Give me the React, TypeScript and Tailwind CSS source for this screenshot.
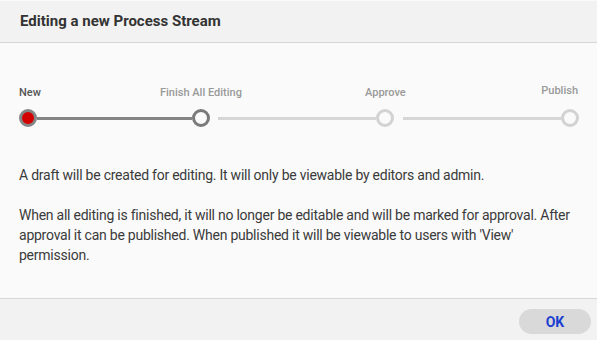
const STEPS = ["New", "Finish All Editing", "Approve", "Publish"];

function Circle({ kind }: { kind: "current" | "done" | "todo" }) {
  if (kind === "current")
    return <div className="w-[18px] h-[18px] rounded-full border-[3px] border-[#858585] bg-[#d30000] flex-shrink-0" />;
  if (kind === "done")
    return <div className="w-[18px] h-[18px] rounded-full border-[3px] border-[#7a7a7a] bg-[#fafafa] flex-shrink-0" />;
  return <div className="w-[18px] h-[18px] rounded-full border-[3px] border-[#d2d2d2] bg-[#fafafa] flex-shrink-0" />;
}

export default function App() {
  return (
    <div
      className="w-[597px] h-[340px] flex flex-col bg-[#fafafa] text-[#333333] overflow-hidden"
      style={{ fontFamily: "Roboto, 'Noto Sans', sans-serif" }}
    >
      {/* Header */}
      <div className="h-[43px] flex-shrink-0 bg-[#f2f2f2] border-t border-[#fafafa] border-b-[1px] border-b-[#d6d6d6] flex items-center px-5">
        <span className="text-[15px] font-bold text-[#333333]">Editing a new Process Stream</span>
      </div>

      {/* Body */}
      <div className="flex-1 flex flex-col">
        {/* Stepper labels */}
        <div className="mt-[41px] flex items-end pl-[19px] pr-[19px] text-[11px] leading-[13px] font-medium">
          <span className="text-[#555555] w-[141px]">{STEPS[0]}</span>
          <span className="text-[#999999] w-[205px]">{STEPS[1]}</span>
          <span className="text-[#999999]">{STEPS[2]}</span>
          <span className="text-[#999999] ml-auto mb-[2px]">{STEPS[3]}</span>
        </div>

        {/* Stepper track */}
        <div className="mt-[10px] flex items-center pl-[19px]">
          <Circle kind="current" />
          <div className="w-[155px] h-[3px] bg-[#858585]" />
          <Circle kind="done" />
          <div className="ml-[8px] w-[158px] h-[3px] bg-[#d6d6d6]" />
          <Circle kind="todo" />
          <div className="ml-[9px] w-[158px] h-[3px] bg-[#d6d6d6]" />
          <Circle kind="todo" />
        </div>

        {/* Description */}
        <div className="mt-[38px] pl-[19px] pr-[19px] text-[14px] leading-[20px] tracking-[-0.24px] text-[#3a3a3a]">
          <p>A draft will be created for editing. It will only be viewable by editors and admin.</p>
          <p className="mt-5">
            When all editing is finished, it will no longer be editable and will be marked for approval. After
            approval it can be published. When published it will be viewable to users with 'View' permission.
          </p>
        </div>
      </div>

      {/* Footer */}
      <div className="h-[42px] flex-shrink-0 bg-[#f2f2f2] border-t border-[#d6d6d6] flex items-start justify-end pt-[10px] pr-[6px]">
        <button className="w-[72px] h-[25px] rounded-full bg-[#d9d9d9] text-[14px] font-bold text-[#1c3fd1] leading-none">
          OK
        </button>
      </div>
    </div>
  );
}
